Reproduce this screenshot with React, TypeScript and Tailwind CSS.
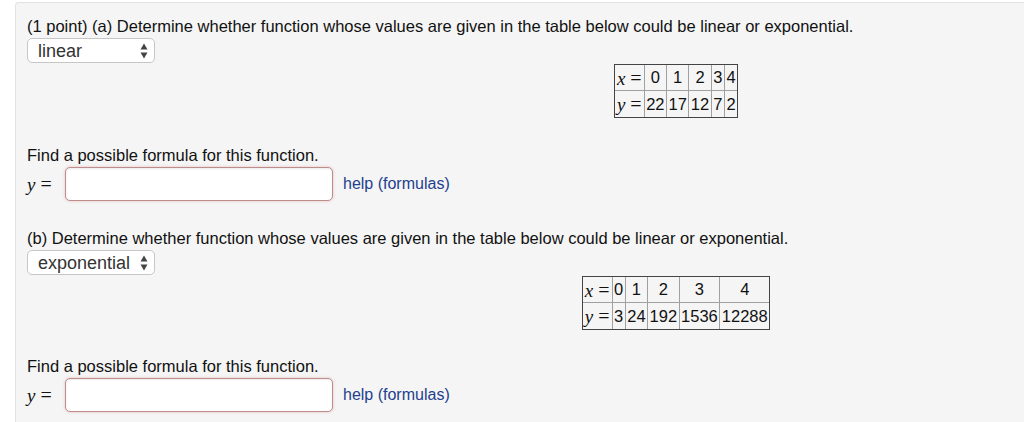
import React from "react";

const sans = { fontFamily: '"Liberation Sans", Arial, Helvetica, sans-serif' };
const serif = { fontFamily: '"Liberation Serif", "Times New Roman", serif' };

// fake native select (mac style), value only
const SelectBox = ({ value }: { value: string }) => (
  <div className="mt-[2px] flex h-[25px] w-[128px] items-center justify-between rounded-[5px] border border-[#c6c6c6] bg-white pl-[10px] pr-[6px] text-[18px] leading-none text-[#333]">
    <span>{value}</span>
    <svg width="8" height="16" viewBox="0 0 8 16" className="text-[#444]">
      <path d="M0.5 6.5 L4 0.5 L7.5 6.5 Z" fill="currentColor" />
      <path d="M0.5 9.5 L4 15.5 L7.5 9.5 Z" fill="currentColor" />
    </svg>
  </div>
);

const MathVar = ({ name }: { name: string }) => (
  <span className="whitespace-nowrap">
    <span className="italic text-[19px]" style={serif}>
      {name}
    </span>
    <span className="ml-[5px] text-[20px]" style={serif}>
      =
    </span>
  </span>
);

const ValueTable = ({ xs, ys }: { xs: string[]; ys: string[] }) => {
  const rows = [
    { label: "x", vals: xs },
    { label: "y", vals: ys },
  ];
  return (
    <div className="mt-[1px] flex w-[1298px] justify-center">
      <table className="border-separate border-spacing-0 border border-[#444] text-[16.5px] text-[#111]">
        <tbody>
          {rows.map((r, ri) => (
            <tr key={r.label}>
              <td
                className={
                  ri === 0
                    ? "h-[26px] border-b border-r border-[#a0a0a0] pl-[2px] pr-[2px] leading-none"
                    : "h-[26px] border-r border-[#a0a0a0] pl-[2px] pr-[2px] leading-none"
                }
              >
                <MathVar name={r.label} />
              </td>
              {r.vals.map((v, i) => (
                <td
                  key={i}
                  className={
                    ri === 0
                      ? i === r.vals.length - 1
                        ? "border-b border-[#a0a0a0] px-[1.5px] text-center leading-none"
                        : "border-b border-r border-[#a0a0a0] px-[1.5px] text-center leading-none"
                      : i === r.vals.length - 1
                        ? "px-[1.5px] text-center leading-none"
                        : "border-r border-[#a0a0a0] px-[1.5px] text-center leading-none"
                  }
                >
                  {v}
                </td>
              ))}
            </tr>
          ))}
        </tbody>
      </table>
    </div>
  );
};

const FormulaRow = () => (
  <div className="mt-[2px] flex items-center">
    <span className="w-[38px] text-[#111]">
      <MathVar name="y" />
    </span>
    <input
      type="text"
      className="h-[34px] w-[268px] rounded-[5px] border border-[#bf8c8c] bg-white px-2 shadow-[inset_0_1px_2px_rgba(0,0,0,0.08),0_0_3px_rgba(185,74,72,0.3)] outline-none"
    />
    <span className="ml-[10px] text-[16px] text-[#23408e]">help (formulas)</span>
  </div>
);

export default function App() {
  return (
    <div className="h-[422px] w-[1024px] overflow-hidden bg-white" style={sans}>
      <div className="ml-[15px] mt-[2px] h-[430px] w-[1322px] rounded-tl-[4px] border-l border-t border-[#e2e2e2] bg-[#f5f5f5] pl-[11px] pt-[13px] text-[16.5px] leading-[20px] text-[#111]">
        <div>
          (1 point) (a) Determine whether function whose values are given in the table below could be linear or
          exponential.
        </div>
        <SelectBox value="linear" />
        <ValueTable xs={["0", "1", "2", "3", "4"]} ys={["22", "17", "12", "7", "2"]} />

        <div className="mt-[27px]">Find a possible formula for this function.</div>
        <FormulaRow />

        <div className="mt-[27px]">
          (b) Determine whether function whose values are given in the table below could be linear or exponential.
        </div>
        <SelectBox value="exponential" />
        <ValueTable xs={["0", "1", "2", "3", "4"]} ys={["3", "24", "192", "1536", "12288"]} />

        <div className="mt-[26px]">Find a possible formula for this function.</div>
        <FormulaRow />
      </div>
    </div>
  );
}
